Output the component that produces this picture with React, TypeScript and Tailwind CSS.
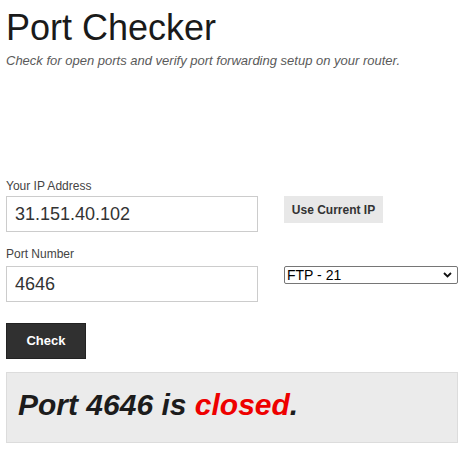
import React, { useState } from 'react';

export default function App() {
  const [ip, setIp] = useState('31.151.40.102');
  const [port, setPort] = useState('4646');
  const [service, setService] = useState('21');

  return (
    <div className="w-[474px] h-[451px] bg-white pl-[6px] font-['Liberation_Sans',Arial,sans-serif] overflow-hidden">
      {/* Header */}
      <h1 className="mt-[6px] text-[36px] leading-[43px] text-[#1a1a1a] font-normal">Port Checker</h1>
      <p className="mt-[3px] text-[13px] leading-[18px] italic text-[#5a5a5a]">
        Check for open ports and verify port forwarding setup on your router.
      </p>

      {/* Form */}
      <div className="mt-[107px] grid grid-cols-[252px_1fr] gap-x-[26px]">
        <div className="flex flex-col">
          <label className="text-[12px] leading-[18px] text-[#444] mb-px">Your IP Address</label>
          <input
            value={ip}
            onChange={(e) => setIp(e.target.value)}
            className="h-[36px] border border-[#ccc] pl-[8px] text-[18px] text-[#333] outline-none"
          />
        </div>
        <div className="pt-[19px]">
          <button className="h-[27px] w-[99px] bg-[#e8e8e8] text-[12px] font-bold text-[#333]">
            Use Current IP
          </button>
        </div>

        <div className="flex flex-col mt-[13px]">
          <label className="text-[12px] leading-[18px] text-[#444] mb-[3px]">Port Number</label>
          <input
            value={port}
            onChange={(e) => setPort(e.target.value)}
            className="h-[36px] border border-[#ccc] pl-[8px] text-[18px] text-[#333] outline-none"
          />
        </div>
        <div className="mt-[13px] pt-[21px]">
          <div className="relative w-[174px]">
            <select
              value={service}
              onChange={(e) => setService(e.target.value)}
              className="appearance-none block w-full h-[18px] border border-[#767676] rounded-[2px] bg-white pl-[2px] text-[14px] leading-[16px] text-black outline-none"
            >
              <option value="21">FTP - 21</option>
              <option value="22">SSH - 22</option>
              <option value="80">HTTP - 80</option>
              <option value="443">HTTPS - 443</option>
            </select>
            <svg
              className="absolute right-[6px] top-[6px] pointer-events-none"
              width="9"
              height="6"
              viewBox="0 0 9 6"
            >
              <path d="M1 1l3.5 3.5L8 1" fill="none" stroke="#111" strokeWidth="1.8" />
            </svg>
          </div>
        </div>
      </div>

      <button className="mt-[21px] h-[36px] w-[80px] bg-[#303030] text-white text-[13px] font-bold border border-[#222]">
        Check
      </button>

      {/* Result */}
      <div className="mt-[13px] w-[452px] bg-[#ebebeb] border border-[#dcdcdc] pl-[11px] pt-[14px] pb-[19px]">
        <h2 className="text-[30px] leading-[36px] font-bold italic text-[#1c1c1c]">
          Port {port} is <span className="text-[#ee0000]">closed</span>.
        </h2>
      </div>
    </div>
  );
}
